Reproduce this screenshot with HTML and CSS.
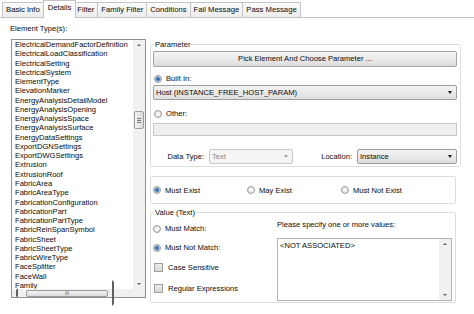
FILE: index.html
```html
<!DOCTYPE html>
<html lang="en">
<head>
  <meta charset="UTF-8" />
  <title>Details</title>
  <link rel="stylesheet" href="styles.css">
</head>
<body>

  <div class="tabs">
    <div class="tab first">Basic Info</div>
    <div class="tab active">Details</div>
    <div class="tab">Filter</div>
    <div class="tab">Family Filter</div>
    <div class="tab">Conditions</div>
    <div class="tab">Fail Message</div>
    <div class="tab">Pass Message</div>
  </div>

  <div class="panel">
    <div class="left">
      <div class="caption">Element Type(s):</div>
      <div class="listbox">
        <div class="list-area">
          <ul class="items">
            <li>ElectricalDemandFactorDefinition</li>
            <li>ElectricalLoadClassification</li>
            <li>ElectricalSetting</li>
            <li>ElectricalSystem</li>
            <li>ElementType</li>
            <li>ElevationMarker</li>
            <li>EnergyAnalysisDetailModel</li>
            <li>EnergyAnalysisOpening</li>
            <li>EnergyAnalysisSpace</li>
            <li>EnergyAnalysisSurface</li>
            <li>EnergyDataSettings</li>
            <li>ExportDGNSettings</li>
            <li>ExportDWGSettings</li>
            <li>Extrusion</li>
            <li>ExtrusionRoof</li>
            <li>FabricArea</li>
            <li>FabricAreaType</li>
            <li>FabricationConfiguration</li>
            <li>FabricationPart</li>
            <li>FabricationPartType</li>
            <li>FabricReinSpanSymbol</li>
            <li>FabricSheet</li>
            <li>FabricSheetType</li>
            <li>FabricWireType</li>
            <li>FaceSplitter</li>
            <li>FaceWall</li>
            <li>Family</li>
          </ul>
          <div class="vscroll">
            <span class="arrow up"></span>
            <div class="vtrack"><div class="vthumb"><i></i><i></i><i></i></div></div>
            <span class="arrow down"></span>
          </div>
        </div>
        <div class="hscroll">
          <span class="arrow left"></span>
          <div class="htrack"><div class="hthumb">III</div></div>
          <span class="arrow right"></span>
          <span class="corner"></span>
        </div>
      </div>
    </div>

    <div class="right">
      <fieldset class="group param">
        <legend>Parameter</legend>
        <div class="button">Pick Element And Choose Parameter ...</div>
        <div class="option row-built"><span class="radio checked"></span>Built In:</div>
        <div class="select wide"><span>Host (INSTANCE_FREE_HOST_PARAM)</span><b class="caret"></b></div>
        <div class="option row-other"><span class="radio"></span>Other:</div>
        <div class="textbox disabled"></div>
        <div class="data-row">
          <span class="field-label type-label">Data Type:</span>
          <div class="select disabled type"><span>Text</span><b class="caret"></b></div>
          <span class="field-label loc-label">Location:</span>
          <div class="select loc"><span>Instance</span><b class="caret"></b></div>
        </div>
      </fieldset>

      <div class="group exist">
        <div class="option"><span class="radio checked"></span>Must Exist</div>
        <div class="option"><span class="radio"></span>May Exist</div>
        <div class="option"><span class="radio"></span>Must Not Exist</div>
      </div>

      <fieldset class="group value">
        <legend>Value (Text)</legend>
        <div class="value-body">
          <div class="value-opts">
            <div class="option"><span class="radio"></span>Must Match:</div>
            <div class="option"><span class="radio checked"></span>Must Not Match:</div>
            <div class="option"><span class="check"></span>Case Sensitive</div>
            <div class="option"><span class="check"></span>Regular Expressions</div>
          </div>
          <div class="value-list">
            <div class="hint">Please specify one or more values:</div>
            <div class="memo">
              <div class="memo-text">&lt;NOT ASSOCIATED&gt;</div>
              <div class="memo-scroll">
                <span class="arrow up"></span>
                <span class="arrow down"></span>
              </div>
            </div>
          </div>
        </div>
      </fieldset>
    </div>
  </div>

</body>
</html>
```

FILE: styles.css
```css
body {
  margin: 0;
  width: 474px;
  height: 314px;
  overflow: hidden;
  background: #fff;
  color: #0a0a0a;
  font-family: "Liberation Sans", Arial, sans-serif;
  font-size: 7.6px;
}

/* tabs */

.tabs {
  display: flex;
  height: 15px;
  padding: 2px 0 0 2px;
  border-bottom: 1px solid #c4c4c4;
}

.tab {
  height: 14px;
  line-height: 14px;
  padding: 0 3px;
  font-size: 7.7px;
  border: 1px solid #c4c4c4;
  border-left: none;
  border-bottom: none;
  background: linear-gradient(#fbfbfb, #ececec);
}

.tab.first {
  border-left: 1px solid #c4c4c4;
}

.tab.active {
  position: relative;
  z-index: 1;
  height: 17px;
  margin: -2px -2px 0 -1px;
  padding: 0 4px;
  border-left: 1px solid #c4c4c4;
  background: #fff;
}

/* layout */

.panel {
  display: flex;
  padding: 0 0 0 10px;
}

.left {
  width: 136px;
  padding-top: 6px;
}

.caption {
  height: 9px;
  line-height: 9px;
  margin-bottom: 6px;
}

.listbox {
  margin-left: 1px;
  width: 133px;
  height: 257px;
  border: 1px solid #8d9096;
  display: flex;
  flex-direction: column;
}

.list-area {
  flex: 1;
  display: flex;
  min-height: 0;
  overflow: hidden;
}

.items {
  flex: 1;
  list-style: none;
  margin: 0;
  padding: 0 0 0 3px;
  overflow: hidden;
}

.items li {
  height: 9.27px;
  line-height: 9.27px;
  white-space: nowrap;
}

.vscroll {
  width: 12px;
  background: #f0f0f0;
  display: flex;
  flex-direction: column;
  align-items: center;
}

.vtrack {
  flex: 1;
  width: 100%;
}

.vthumb {
  width: 8px;
  height: 16px;
  margin: 61px auto 0;
  border: 1px solid #9c9c9c;
  border-radius: 2px;
  background: linear-gradient(90deg, #f4f4f4, #dadada);
  display: flex;
  flex-direction: column;
  justify-content: center;
  align-items: center;
  gap: 1px;
}

.vthumb i {
  width: 4px;
  height: 1px;
  background: #777;
}

.arrow {
  width: 0;
  height: 0;
  margin: 4px;
  border: 2px solid transparent;
}

.arrow.up { border-bottom: 2px solid #606060; border-top: none; }
.arrow.down { border-top: 2px solid #606060; border-bottom: none; }
.arrow.left { border-right: 2px solid #606060; border-left: none; }
.arrow.right { border-left: 2px solid #606060; border-right: none; }

.hscroll {
  height: 8px;
  display: flex;
  align-items: center;
  background: #f0f0f0;
}

.htrack {
  flex: 1;
}

.hthumb {
  width: 80px;
  height: 5px;
  margin-left: 4px;
  border: 1px solid #9c9c9c;
  border-radius: 2px;
  background: linear-gradient(#f4f4f4, #dadada);
  font-size: 5px;
  line-height: 5px;
  text-align: center;
  color: #555;
}

.corner {
  width: 12px;
  height: 8px;
  background: #f0f0f0;
}

/* right side */

.right {
  width: 306px;
  margin-left: 4px;
  padding-top: 22px;
}

.group {
  margin: 0;
  border: 1px solid #dddddd;
  border-radius: 2px;
}

fieldset.group {
  padding: 0 3px 2px 2px;
}

legend {
  padding: 0 1px;
  margin-left: 1px;
  line-height: 9px;
}

.param {
  display: flex;
  flex-direction: column;
}

.button {
  height: 14px;
  line-height: 14px;
  margin-top: 2px;
  border: 1px solid #a5a5a5;
  border-radius: 2px;
  background: linear-gradient(#f6f6f6, #dcdcdc);
  text-align: center;
}

.option {
  display: flex;
  align-items: center;
  white-space: nowrap;
}

.row-built {
  height: 9px;
  margin: 7px 0 2px 1px;
}

.row-other {
  height: 9px;
  margin: 9px 0 5px 1px;
}

.radio {
  width: 6px;
  height: 6px;
  margin-right: 4px;
  border: 1px solid #9a9a9a;
  border-radius: 50%;
  background: radial-gradient(#ffffff, #d6d6d6);
}

.radio.checked {
  background: radial-gradient(#2c5b9a 0, #4a7fc0 1.5px, #9fb9da 2.4px, #e8e8e8 3px);
}

.check {
  width: 7px;
  height: 7px;
  margin-right: 5px;
  border: 1px solid #a0a0a0;
  background: linear-gradient(#ececec, #d8d8d8);
}

.select {
  display: flex;
  align-items: center;
  height: 13px;
  padding-left: 2px;
  border: 1px solid #9e9e9e;
  border-radius: 2px;
  background: linear-gradient(#f4f4f4, #dedede);
}

.select span {
  flex: 1;
}

.caret {
  width: 0;
  height: 0;
  margin-right: 4px;
  border-left: 2.5px solid transparent;
  border-right: 2.5px solid transparent;
  border-top: 3px solid #1a1a1a;
}

.select.disabled {
  background: #f4f4f4;
  border-color: #c8c8c8;
  color: #8a8a8a;
}

.select.disabled .caret {
  border-top-color: #a8a8a8;
}

.textbox {
  height: 11px;
  border: 1px solid #c8c8c8;
}

.textbox.disabled {
  background: #efefef;
}

.data-row {
  display: flex;
  align-items: center;
  margin-top: 13px;
}

.field-label {
  text-align: right;
  margin-right: 5px;
}

.type-label { width: 51px; }
.select.type { width: 80px; }
.loc-label { width: 59px; }
.select.loc { width: 96px; }

.exist {
  display: grid;
  grid-template-columns: 94px 94px 94px;
  height: 26px;
  align-items: center;
  margin-top: 9px;
  padding-left: 2px;
}

.value {
  margin-top: 4px;
}

fieldset.value {
  padding-bottom: 1px;
}

.value-body {
  display: flex;
}

.value-opts {
  width: 124px;
  padding-top: 7px;
}

.value-opts .option {
  height: 9px;
}

.value-opts .option:nth-child(2) { margin-top: 10px; }
.value-opts .option:nth-child(3) { margin-top: 11px; padding-left: 1px; }
.value-opts .option:nth-child(4) { margin-top: 12px; padding-left: 1px; }

.hint {
  height: 9px;
  line-height: 9px;
  margin-top: 3px;
}

.value-list {
  flex: 1;
}

.memo {
  display: flex;
  height: 61px;
  margin-top: 9px;
  border: 1px solid #b4b4b4;
}

.memo-text {
  flex: 1;
  padding: 2px 2px;
}

.memo-scroll {
  width: 12px;
  background: #f0f0f0;
  display: flex;
  flex-direction: column;
  justify-content: space-between;
  align-items: center;
}
```
